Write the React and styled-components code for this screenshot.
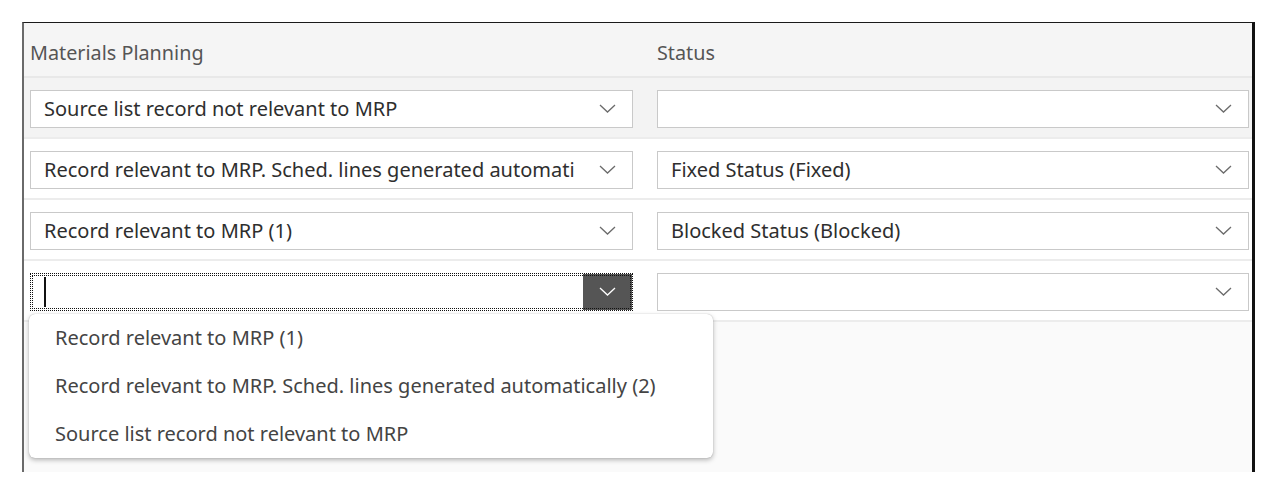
import React from 'react';
import styled, { createGlobalStyle, css } from 'styled-components';

const GlobalStyle = createGlobalStyle`
  html, body {
    margin: 0;
    padding: 0;
    background: #ffffff;
    font-family: "Noto Sans", "Open Sans", "Liberation Sans", sans-serif;
  }
`;

const Page = styled.div`
  padding: 22px 0 0 22px;
  height: 492px;
  box-sizing: border-box;
`;

const Frame = styled.div`
  width: 1233px;
  height: 450px;
  box-sizing: border-box;
  border-top: 1px solid #1a1a1a;
  border-left: 2px solid #6a6a6a;
  border-right: 3px solid #111111;
  background: #fafafa;
`;

const Grid = styled.div`
  display: grid;
  grid-template-columns: 603px 1fr;
  column-gap: 24px;
  padding: 0 3px 0 6px;
  box-sizing: border-box;
`;

const Header = styled(Grid)`
  height: 55px;
  align-items: center;
  background: #f5f5f5;
  border-bottom: 2px solid #e8e8e8;
`;

const HeaderCell = styled.div`
  font-size: 19.8px;
  color: #555555;
  padding-top: 5px;
`;

const Row = styled(Grid)`
  height: 61px;
  align-items: center;
  padding-top: 2px;
  border-bottom: 2px solid #ececec;
  background: ${p => (p.$shaded ? '#f3f3f3' : '#ffffff')};
  box-sizing: border-box;
`;

const Cell = styled.div`
  position: relative;
`;

const Field = styled.div`
  display: flex;
  align-items: center;
  height: 38px;
  box-sizing: border-box;
  background: #ffffff;
  border: 1px solid #c9c9c9;
  ${p => p.$focused && css`
    border: 1px dotted #111111;
    outline: 1px dotted #111111;
    outline-offset: -3px;
  `}
`;

const Value = styled.div`
  flex: 1;
  min-width: 0;
  margin-right: 8px;
  padding-left: 13px;
  font-size: 20px;
  color: #2e2e2e;
  white-space: nowrap;
  overflow: hidden;
  display: flex;
  align-items: center;
`;

const Caret = styled.span`
  width: 1.5px;
  height: 30px;
  background: #111111;
`;

const Toggle = styled.div`
  width: 49px;
  flex: none;
  align-self: stretch;
  display: flex;
  align-items: center;
  justify-content: center;
  color: #6b6b6b;
  ${p => p.$active && css`
    background: #555555;
    color: #ffffff;
  `}
`;

const Popover = styled.div`
  position: absolute;
  top: 41px;
  left: -1px;
  width: 684px;
  height: 144px;
  box-sizing: border-box;
  background: #ffffff;
  border-radius: 6px;
  box-shadow: 0 2px 5px rgba(0, 0, 0, 0.28), 0 0 1px rgba(0, 0, 0, 0.3);
  z-index: 2;
`;

const Option = styled.div`
  height: 48px;
  display: flex;
  align-items: center;
  padding-left: 26px;
  font-size: 20px;
  color: #444444;
`;

const Chevron = () => (
  <svg width="17" height="9" viewBox="0 0 17 9" fill="none">
    <polyline points="1,1 8.5,8 16,1" stroke="currentColor" strokeWidth="1.3" />
  </svg>
);

const Select = ({ value, focused, children }) => (
  <Cell>
    <Field $focused={focused}>
      <Value>{focused ? <Caret /> : value}</Value>
      <Toggle $active={focused}>
        <Chevron />
      </Toggle>
    </Field>
    {children}
  </Cell>
);

const rows = [
  { plan: 'Source list record not relevant to MRP', status: '' },
  { plan: 'Record relevant to MRP. Sched. lines generated automatically (2)', status: 'Fixed Status (Fixed)' },
  { plan: 'Record relevant to MRP (1)', status: 'Blocked Status (Blocked)' },
];

const options = [
  'Record relevant to MRP (1)',
  'Record relevant to MRP. Sched. lines generated automatically (2)',
  'Source list record not relevant to MRP',
];

export default function App() {
  return (
    <>
      <GlobalStyle />
      <Page>
        <Frame>
          <Header>
            <HeaderCell>Materials Planning</HeaderCell>
            <HeaderCell>Status</HeaderCell>
          </Header>
          {rows.map((r, i) => (
            <Row key={i} $shaded={i === 0}>
              <Select value={r.plan} />
              <Select value={r.status} />
            </Row>
          ))}
          <Row>
            <Select focused>
              <Popover>
                {options.map(o => (
                  <Option key={o}>{o}</Option>
                ))}
              </Popover>
            </Select>
            <Select value="" />
          </Row>
        </Frame>
      </Page>
    </>
  );
}
